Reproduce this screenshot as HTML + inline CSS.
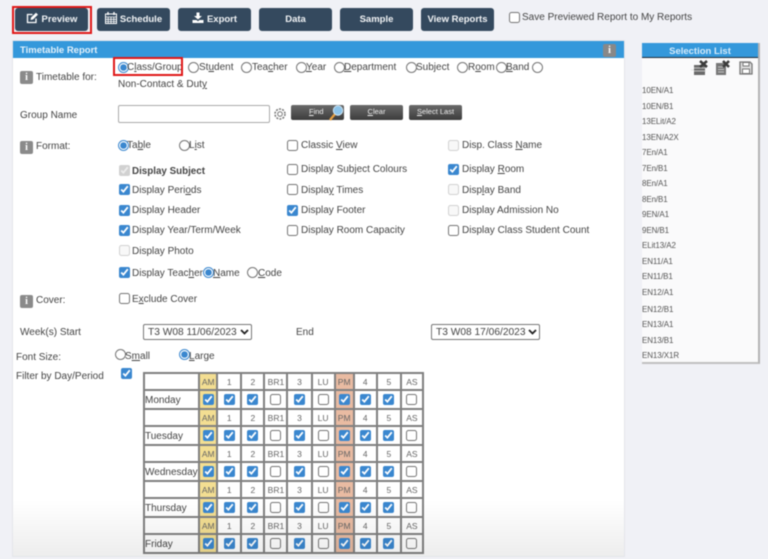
<!DOCTYPE html>
<html lang="en"><head><meta charset="utf-8"><title>Timetable Report</title>
<style>
html,body{margin:0;padding:0;width:768px;height:559px;overflow:hidden;background:#f0f1f6}
#w{position:relative;width:768px;height:559px;overflow:hidden;font:10px/16px "Liberation Sans",sans-serif;color:#444;filter:blur(.45px)}
.t{position:absolute;white-space:nowrap}
input[type=checkbox],input[type=radio]{margin:0;width:11px;height:11px;accent-color:#3a87cf}
input.a{position:absolute}
.btn{position:absolute;top:8px;height:23px;background:#34495e;border-radius:3px;color:#f2f4f6;font-weight:bold;font-size:9.500px;line-height:23px;text-align:center;width:73px}
.btn svg{vertical-align:-2px;margin-right:3px}
.b2{position:absolute;top:105px;height:15px;width:53px;background:linear-gradient(#6a6a6a,#3c3c3c);border-radius:2px;color:#eee;font-size:7.500px;line-height:14px;text-align:center}
.ic{position:absolute;width:13px;height:13px;background:#8a8a8a;border-radius:2px;color:#fff;font:bold 10px/13px "Liberation Serif",serif;text-align:center}
select{position:absolute;height:16px;width:109px;font:10.200px "Liberation Sans",sans-serif;color:#444;background:#fff;border:1px solid #777;border-radius:2px;padding:0 0 0 4px;margin:0;appearance:none;-webkit-appearance:none}
.li{position:absolute;left:642px;font-size:8px;letter-spacing:-.1px;line-height:14px;color:#555;white-space:nowrap}
#g{position:absolute;left:143px;top:372px;width:281px;border:1px solid #808080;border-collapse:separate;border-spacing:0;table-layout:fixed;background:#fff}
#g td{border:1px solid #808080;background:#fff;padding:0;text-align:center;font-size:8.500px;line-height:10px;color:#666;overflow:hidden}
#g td.d{text-align:left;font-size:10px;color:#444;padding:2px 0 0 0;line-height:12px;white-space:nowrap}
#g td.am{background:#f3de92}
#g td.pm{background:#e9bba2}
#g input{display:block;margin:0 auto}
#g tr.h{height:17px}
#g tr.r{height:19px}
</style></head><body><div id="w">

<div class="t" style="left:12px;top:6px;width:76px;height:24px;border:2px solid #e01818"></div>
<div class="btn" style="left:15px">
<svg width="13" height="12" viewBox="0 0 13 12"><path d="M10 6.500V10.500H1.500V2.500H6.500" fill="none" stroke="#fff" stroke-width="1.300"/><path d="M4.500 8L5 5.500 10 .8 12 2.600 7 7.500Z" fill="#fff"/></svg>Preview</div>
<div class="btn" style="left:97px">
<svg width="12" height="12" viewBox="0 0 12 12"><path d="M.5 2H11.500V11.500H.5Z" fill="none" stroke="#fff"/><path d="M.5 5H11.500M.5 7.300H11.500M.5 9.500H11.500M3.200 5V11.500M6 5V11.500M8.800 5V11.500" stroke="#fff" stroke-width=".8"/><path d="M3 0V3M9 0V3" stroke="#fff" stroke-width="1.400"/></svg>Schedule</div>
<div class="btn" style="left:178px">
<svg width="12" height="12" viewBox="0 0 12 12"><path d="M4.500 .5H7.500V4H10L6 7.500 2 4H4.500Z" fill="#fff"/><path d="M.5 8H4.500L6 9.200 7.500 8H11.500V11H.5Z" fill="#fff"/></svg>Export</div>
<div class="btn" style="left:259px">Data</div>
<div class="btn" style="left:340px">Sample</div>
<div class="btn" style="left:421px">View Reports</div>

<input type="checkbox" class="a" style="left:509px;top:12px">
<div class="t" style="left:522px;top:10px">Save Previewed Report to My Reports</div>

<div class="t" style="left:13px;top:41px;width:611px;height:515px;background:#fff;box-shadow:0 0 0 1px #e4e6ea"></div>
<div class="t" style="left:13px;top:41px;width:611px;height:17px;background:#3498db"></div>
<div class="t" style="left:20px;top:43px;color:#e3f1fb;font-weight:bold;font-size:9.500px">Timetable Report</div>
<div class="ic" style="left:603px;top:44px;background:#888">i</div>

<input type="radio" class="a" style="left:118px;top:62px" checked><div class="t" style="left:127px;top:60px">C<u>l</u>ass/Group</div>
<div class="t" style="left:113px;top:57px;width:66px;height:15px;border:2px solid #e01818"></div>
<input type="radio" class="a" style="left:188px;top:62px"><div class="t" style="left:199px;top:60px">St<u>u</u>dent</div>
<input type="radio" class="a" style="left:241px;top:62px"><div class="t" style="left:252px;top:60px">Tea<u>c</u>her</div>
<input type="radio" class="a" style="left:296px;top:62px"><div class="t" style="left:306px;top:60px"><u>Y</u>ear</div>
<input type="radio" class="a" style="left:334px;top:62px"><div class="t" style="left:344px;top:60px"><u>D</u>epartment</div>
<input type="radio" class="a" style="left:406px;top:62px"><div class="t" style="left:416px;top:60px">Subject</div>
<input type="radio" class="a" style="left:457px;top:62px"><div class="t" style="left:468px;top:60px">R<u>o</u>om</div>
<input type="radio" class="a" style="left:496px;top:62px"><div class="t" style="left:506px;top:60px"><u>B</u>and</div>
<input type="radio" class="a" style="left:532px;top:62px">
<div class="t" style="left:118px;top:77px">Non-Contact &amp; Dut<u>y</u></div>

<div class="ic" style="left:20px;top:71px">i</div>
<div class="t" style="left:36px;top:70px">Timetable for:</div>

<div class="t" style="left:20px;top:108px">Group Name</div>
<div class="t" style="left:118px;top:105px;width:150px;height:16px;border:1px solid #aaa;border-radius:2px;background:#fff"></div>
<svg class="t" style="left:273px;top:107px" width="14" height="14" viewBox="0 0 14 14"><circle cx="7" cy="7" r="2.300" fill="none" stroke="#777"/><circle cx="7" cy="7" r="5" fill="none" stroke="#777" stroke-width="1.500" stroke-dasharray="2 1.200"/></svg>
<div class="b2" style="left:291px;text-align:left;text-indent:18px"><u>F</u>ind
<svg style="position:absolute;left:37px;top:0" width="16" height="16" viewBox="0 0 16 16"><path d="M2 15L7 9" stroke="#e8a040" stroke-width="2.200"/><circle cx="10" cy="5.500" r="4.700" fill="#8cc4ea" stroke="#cfe6f5"/></svg></div>
<div class="b2" style="left:350px"><u>C</u>lear</div>
<div class="b2" style="left:409px"><u>S</u>elect Last</div>

<div class="ic" style="left:20px;top:141px">i</div>
<div class="t" style="left:36px;top:139px">Format:</div>
<input type="radio" class="a" style="left:118px;top:140px" checked><div class="t" style="left:127px;top:138px">Ta<u>b</u>le</div>
<input type="radio" class="a" style="left:179px;top:140px"><div class="t" style="left:189px;top:138px">L<u>i</u>st</div>

<input type="checkbox" class="a" style="left:119px;top:165px" checked disabled><div class="t" style="left:132px;top:164px;font-weight:bold;font-size:9.800px">Display Subject</div>
<input type="checkbox" class="a" style="left:119px;top:184px" checked><div class="t" style="left:132px;top:183px">Display Peri<u>o</u>ds</div>
<input type="checkbox" class="a" style="left:119px;top:205px" checked><div class="t" style="left:132px;top:203px">Display Header</div>
<input type="checkbox" class="a" style="left:119px;top:225px" checked><div class="t" style="left:132px;top:223px">Display Year/Term/Week</div>
<input type="checkbox" class="a" style="left:119px;top:245px" disabled><div class="t" style="left:132px;top:244px">Display Photo</div>
<input type="checkbox" class="a" style="left:119px;top:267px" checked><div class="t" style="left:132px;top:266px">Display Teac<u>h</u>er</div>
<input type="radio" class="a" style="left:203px;top:267px" checked><div class="t" style="left:213px;top:266px"><u>N</u>ame</div>
<input type="radio" class="a" style="left:247px;top:267px"><div class="t" style="left:258px;top:266px"><u>C</u>ode</div>

<input type="checkbox" class="a" style="left:287px;top:140px"><div class="t" style="left:301px;top:138px">Classic <u>V</u>iew</div>
<input type="checkbox" class="a" style="left:287px;top:164px"><div class="t" style="left:301px;top:162px">Display Subject Colours</div>
<input type="checkbox" class="a" style="left:287px;top:184px"><div class="t" style="left:301px;top:183px">Displa<u>y</u> Times</div>
<input type="checkbox" class="a" style="left:287px;top:205px" checked><div class="t" style="left:301px;top:203px">Display Footer</div>
<input type="checkbox" class="a" style="left:287px;top:225px"><div class="t" style="left:301px;top:223px">Display Room Capacity</div>

<input type="checkbox" class="a" style="left:448px;top:140px" disabled><div class="t" style="left:462px;top:138px">Disp. Class <u>N</u>ame</div>
<input type="checkbox" class="a" style="left:448px;top:164px" checked><div class="t" style="left:462px;top:162px">Display <u>R</u>oom</div>
<input type="checkbox" class="a" style="left:448px;top:184px" disabled><div class="t" style="left:462px;top:183px">Disp<u>l</u>ay Band</div>
<input type="checkbox" class="a" style="left:448px;top:205px" disabled><div class="t" style="left:462px;top:203px">Display Admission No</div>
<input type="checkbox" class="a" style="left:448px;top:225px"><div class="t" style="left:462px;top:223px">Display Class Student Count</div>

<div class="ic" style="left:20px;top:295px">i</div>
<div class="t" style="left:36px;top:293px">Cover:</div>
<input type="checkbox" class="a" style="left:119px;top:293px"><div class="t" style="left:132px;top:292px">E<u>x</u>clude Cover</div>

<div class="t" style="left:20px;top:325px">Week(s) Start</div>
<select style="left:143px;top:324px"><option>T3 W08 11/06/2023</option></select>
<svg class="t" style="left:240px;top:329px" width="9" height="6" viewBox="0 0 9 6"><path d="M1 1L4.500 4.500 8 1" fill="none" stroke="#222" stroke-width="1.800"/></svg>
<div class="t" style="left:296px;top:325px">End</div>
<select style="left:431px;top:324px"><option>T3 W08 17/06/2023</option></select>
<svg class="t" style="left:528px;top:329px" width="9" height="6" viewBox="0 0 9 6"><path d="M1 1L4.500 4.500 8 1" fill="none" stroke="#222" stroke-width="1.800"/></svg>

<div class="t" style="left:16px;top:350px">Font Size:</div>
<input type="radio" class="a" style="left:115px;top:349px"><div class="t" style="left:125px;top:349px">S<u>m</u>all</div>
<input type="radio" class="a" style="left:179px;top:349px" checked><div class="t" style="left:189px;top:349px"><u>L</u>arge</div>
<div class="t" style="left:16px;top:369px">Filter by Day/Period</div>
<input type="checkbox" class="a" style="left:121px;top:368px" checked>

<table id="g"><colgroup><col style="width:55px"><col style="width:18px"><col style="width:24px"><col style="width:23px"><col style="width:23px"><col style="width:24px"><col style="width:23px"><col style="width:19px"><col style="width:23px"><col style="width:24px"><col style="width:22px"></colgroup>
<tr class="h"><td></td><td class="am">AM</td><td>1</td><td>2</td><td>BR1</td><td>3</td><td>LU</td><td class="pm">PM</td><td>4</td><td>5</td><td>AS</td></tr>
<tr class="r"><td class="d">Monday</td><td class="am"><input type="checkbox" checked></td><td><input type="checkbox" checked></td><td><input type="checkbox" checked></td><td><input type="checkbox"></td><td><input type="checkbox" checked></td><td><input type="checkbox"></td><td class="pm"><input type="checkbox" checked></td><td><input type="checkbox" checked></td><td><input type="checkbox" checked></td><td><input type="checkbox"></td></tr>
<tr class="h"><td></td><td class="am">AM</td><td>1</td><td>2</td><td>BR1</td><td>3</td><td>LU</td><td class="pm">PM</td><td>4</td><td>5</td><td>AS</td></tr>
<tr class="r"><td class="d">Tuesday</td><td class="am"><input type="checkbox" checked></td><td><input type="checkbox" checked></td><td><input type="checkbox" checked></td><td><input type="checkbox"></td><td><input type="checkbox" checked></td><td><input type="checkbox"></td><td class="pm"><input type="checkbox" checked></td><td><input type="checkbox" checked></td><td><input type="checkbox" checked></td><td><input type="checkbox"></td></tr>
<tr class="h"><td></td><td class="am">AM</td><td>1</td><td>2</td><td>BR1</td><td>3</td><td>LU</td><td class="pm">PM</td><td>4</td><td>5</td><td>AS</td></tr>
<tr class="r"><td class="d">Wednesday</td><td class="am"><input type="checkbox" checked></td><td><input type="checkbox" checked></td><td><input type="checkbox" checked></td><td><input type="checkbox"></td><td><input type="checkbox" checked></td><td><input type="checkbox"></td><td class="pm"><input type="checkbox" checked></td><td><input type="checkbox" checked></td><td><input type="checkbox" checked></td><td><input type="checkbox"></td></tr>
<tr class="h"><td></td><td class="am">AM</td><td>1</td><td>2</td><td>BR1</td><td>3</td><td>LU</td><td class="pm">PM</td><td>4</td><td>5</td><td>AS</td></tr>
<tr class="r"><td class="d">Thursday</td><td class="am"><input type="checkbox" checked></td><td><input type="checkbox" checked></td><td><input type="checkbox" checked></td><td><input type="checkbox"></td><td><input type="checkbox" checked></td><td><input type="checkbox"></td><td class="pm"><input type="checkbox" checked></td><td><input type="checkbox" checked></td><td><input type="checkbox" checked></td><td><input type="checkbox"></td></tr>
<tr class="h"><td></td><td class="am">AM</td><td>1</td><td>2</td><td>BR1</td><td>3</td><td>LU</td><td class="pm">PM</td><td>4</td><td>5</td><td>AS</td></tr>
<tr class="r"><td class="d">Friday</td><td class="am"><input type="checkbox" checked></td><td><input type="checkbox" checked></td><td><input type="checkbox" checked></td><td><input type="checkbox"></td><td><input type="checkbox" checked></td><td><input type="checkbox"></td><td class="pm"><input type="checkbox" checked></td><td><input type="checkbox" checked></td><td><input type="checkbox" checked></td><td><input type="checkbox"></td></tr>
</table>
<div class="t" style="left:13px;top:500px;width:611px;height:56px;background:linear-gradient(rgba(0,0,0,0),rgba(0,0,0,.07))"></div>

<div class="t" style="left:642px;top:43px;width:116px;height:319px;background:#fafafb;border-right:2px solid #b4b4b4;border-bottom:2px solid #c0c0c0"></div>
<div class="t" style="left:642px;top:43px;width:116px;height:14px;background:#3498db;border-bottom:1px solid #1c2b3a;color:#d6ebfa;font-weight:bold;font-size:9.500px;line-height:17px;text-align:center">Selection List</div>
<svg class="t" style="left:691px;top:60px" width="18" height="16" viewBox="0 0 18 16"><path d="M3 5H14V15H3Z" fill="#6a6a6a"/><path d="M0 10H3M3 8H15M3 11H15" stroke="#ddd" stroke-width=".8"/><path d="M9 1L16 7M16 1L9 7" stroke="#3c3c3c" stroke-width="2.500"/></svg>
<svg class="t" style="left:715px;top:60px" width="16" height="16" viewBox="0 0 16 16"><path d="M1 3H11V15H1Z" fill="#777"/><path d="M3 7H9M3 9.500H9M3 12H9" stroke="#ddd" stroke-width=".8"/><path d="M8 1L14 7M14 1L8 7" stroke="#3c3c3c" stroke-width="2.500"/></svg>
<svg class="t" style="left:739px;top:61px" width="14" height="14" viewBox="0 0 14 14"><path d="M1 1H11L13 3V13H1Z" fill="#ddd" stroke="#777" stroke-width="1.300"/><path d="M4 1.500H10V5H4ZM3.500 8H10.500V12.500H3.500Z" fill="#fff" stroke="#777"/></svg>

<div class="li" style="top:84px">10EN/A1</div>
<div class="li" style="top:100px">10EN/B1</div>
<div class="li" style="top:115px">13ELit/A2</div>
<div class="li" style="top:131px">13EN/A2X</div>
<div class="li" style="top:146px">7En/A1</div>
<div class="li" style="top:162px">7En/B1</div>
<div class="li" style="top:177px">8En/A1</div>
<div class="li" style="top:193px">8En/B1</div>
<div class="li" style="top:208px">9EN/A1</div>
<div class="li" style="top:224px">9EN/B1</div>
<div class="li" style="top:239px">ELit13/A2</div>
<div class="li" style="top:255px">EN11/A1</div>
<div class="li" style="top:270px">EN11/B1</div>
<div class="li" style="top:286px">EN12/A1</div>
<div class="li" style="top:303px">EN12/B1</div>
<div class="li" style="top:318px">EN13/A1</div>
<div class="li" style="top:334px">EN13/B1</div>
<div class="li" style="top:349px">EN13/X1R</div>

</div></body></html>
